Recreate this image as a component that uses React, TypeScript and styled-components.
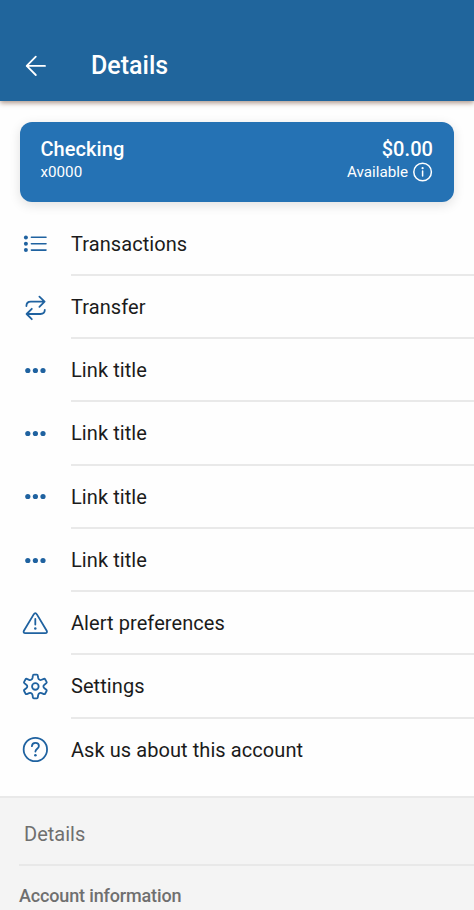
import React from "react";
import styled, { createGlobalStyle } from "styled-components";

const GlobalStyle = createGlobalStyle`
  *, *::before, *::after { box-sizing: border-box; }
  html, body { margin: 0; padding: 0; background: #fff; }
  body { font-family: Roboto, "Liberation Sans", sans-serif; color: #1b1b1b; overflow: hidden; }
`;

const Screen = styled.div`
  width: 100%;
  height: 910px;
  display: flex;
  flex-direction: column;
  overflow: hidden;
  background: #fefefe;
`;

const Header = styled.header`
  flex: none;
  height: 101px;
  padding: 30px 0 0 20px;
  display: flex;
  align-items: center;
  background: #20659c;
  color: #fff;
  box-shadow: 0 2px 5px rgba(92, 48, 24, 0.5);
`;

const BackButton = styled.button`
  width: 32px;
  height: 32px;
  padding: 0;
  border: 0;
  background: none;
  color: inherit;
  display: flex;
`;

const Title = styled.h1`
  margin: 0 0 0 39px;
  font-size: 25px;
  line-height: 30px;
  font-weight: 500;
  letter-spacing: 0;
`;

const AccountCard = styled.section`
  flex: none;
  height: 80.5px;
  margin: 20.6px 20px 0;
  padding: 14.4px 21px 0 20.5px;
  border-radius: 12px;
  background: #2572b4;
  color: #fff;
  display: flex;
  justify-content: space-between;
  box-shadow: 0 3px 12px rgba(0, 0, 0, 0.12);
`;

const CardColumn = styled.div<{ $end?: boolean }>`
  display: flex;
  flex-direction: column;
  align-items: ${(p) => (p.$end ? "flex-end" : "flex-start")};
`;

const CardHeading = styled.div`
  font-size: 20px;
  line-height: 26px;
  font-weight: 500;
  letter-spacing: 0.06px;
`;

const CardCaption = styled.div`
  height: 20px;
  display: flex;
  align-items: center;
  gap: 5px;
  font-size: 15.2px;
  line-height: 20px;
`;

const Menu = styled.nav`
  flex: none;
  margin-top: 10.5px;
  padding-bottom: 14.3px;
`;

const MenuRow = styled.a`
  height: 63.25px;
  padding-left: 20px;
  display: flex;
  align-items: stretch;
  color: #1b1b1b;

  &:last-child > span { border-bottom-color: transparent; }
`;

const RowIcon = styled.div`
  flex: none;
  width: 51px;
  padding-bottom: 1.5px;
  display: flex;
  align-items: center;
  color: #1f62a0;
`;

const RowLabel = styled.span`
  flex: 1;
  padding-top: 0.8px;
  display: flex;
  align-items: center;
  border-bottom: 2px solid #e9e9e9;
  font-size: 20px;
  letter-spacing: 0.07px;
`;

const DetailsPanel = styled.section`
  flex: 1;
  border-top: 2px solid #e9e9e9;
  background: #f4f4f4;
  color: #6f6f6f;
`;

const PanelTitle = styled.h2`
  height: 68px;
  margin: 0 0 0 19px;
  padding: 6px 0 0 5px;
  display: flex;
  align-items: center;
  border-bottom: 2px solid #e8e8e8;
  font-size: 20px;
  font-weight: 400;
`;

const PanelSubtitle = styled.h3`
  margin: 19px 0 0 19px;
  font-size: 18px;
  line-height: 22px;
  font-weight: 500;
  letter-spacing: -0.15px;
`;

const Glyph = styled.svg`
  display: block;
  width: 32px;
  height: 32px;
  fill: none;
  stroke: currentColor;
  stroke-width: 1.8;
  stroke-linecap: round;
  stroke-linejoin: round;
`;

const InfoGlyph = styled(Glyph)`
  width: 20px;
  height: 20px;
  stroke-width: 1.5;
`;

const BackIcon = () => (
  <Glyph viewBox="0 0 32 32">
    <path d="M25 15.9H6.7M15.8 6.7L6.7 15.9L15.8 25" />
  </Glyph>
);

const InfoIcon = () => (
  <InfoGlyph viewBox="0 0 20 20">
    <circle cx="9.6" cy="10" r="8.8" />
    <path d="M9.6 9V14" />
    <circle cx="9.6" cy="6.2" r="1.1" fill="currentColor" stroke="none" />
  </InfoGlyph>
);

const ListIcon = () => (
  <Glyph viewBox="0 0 32 32">
    <g fill="currentColor" stroke="none">
      <circle cx="5.9" cy="10.5" r="2" />
      <circle cx="5.9" cy="16.8" r="2" />
      <circle cx="5.9" cy="23.1" r="2" />
    </g>
    <path strokeWidth="1.6" d="M11.4 10.3H26M11.4 16.8H26M11.4 23.1H26" />
  </Glyph>
);

const TransferIcon = () => (
  <Glyph viewBox="0 0 32 32">
    <path d="M6.4 15C6.4 12 8 10.6 10.8 10.6H24.6M19.4 5.6L24.6 10.6L19.4 15.8" />
    <path d="M24.8 18.8C24.8 21.7 23.2 23 20.4 23H6.6M11.8 17.8L6.6 23L11.8 28.2" />
  </Glyph>
);

const MoreIcon = () => (
  <Glyph viewBox="0 0 32 32">
    <g fill="currentColor" stroke="none">
      <circle cx="7.8" cy="16.5" r="2.6" />
      <circle cx="15.4" cy="16.5" r="2.6" />
      <circle cx="23" cy="16.5" r="2.6" />
    </g>
  </Glyph>
);

const AlertIcon = () => (
  <Glyph viewBox="0 0 32 32">
    <path d="M13.7 7.4Q15.3 5 16.9 7.4L26.7 23.7Q27.7 26.2 25.2 26.2H5.4Q2.9 26.2 3.9 23.7Z" />
    <path d="M15.3 12V17.5" />
    <circle cx="15.3" cy="21.6" r="1.25" fill="currentColor" stroke="none" />
  </Glyph>
);

const GearIcon = () => (
  <Glyph viewBox="0 0 32 32">
    <path d="M13.8 4.6H16.9Q17.7 4.6 17.8 5.4L18.2 8Q18.5 9.3 19.6 9.8Q20.5 10.3 21.6 9.8L23.9 8.8Q24.7 8.5 25.1 9.2L26.6 11.9Q27 12.6 26.4 13.1L24.4 14.7Q23.4 15.4 23.4 16.4Q23.4 17.4 24.4 18.2L26.4 19.8Q27 20.3 26.6 21L25.1 23.7Q24.7 24.4 23.9 24.1L21.6 23.1Q20.5 22.6 19.6 23.1Q18.5 23.6 18.2 24.9L17.8 27.5Q17.7 28.3 16.9 28.3H13.8Q13 28.3 12.9 27.5L12.5 24.9Q12.2 23.6 11.1 23.1Q10.2 22.6 9.1 23.1L6.8 24.1Q6 24.4 5.6 23.7L4.1 21Q3.7 20.3 4.3 19.8L6.3 18.2Q7.3 17.4 7.3 16.4Q7.3 15.4 6.3 14.7L4.3 13.1Q3.7 12.6 4.1 11.9L5.6 9.2Q6 8.5 6.8 8.8L9.1 9.8Q10.2 10.3 11.1 9.8Q12.2 9.3 12.5 8L12.9 5.4Q13 4.6 13.8 4.6Z" />
    <circle cx="15.35" cy="16.45" r="3.3" />
  </Glyph>
);

const HelpIcon = () => (
  <Glyph viewBox="0 0 32 32">
    <circle cx="15.35" cy="16.5" r="11.7" />
    <path d="M11.9 13.2C12 10.8 13.5 9.8 15.4 9.8C17.4 9.8 18.9 11 18.9 12.9C18.9 15.7 15.4 15.7 15.4 18.6" />
    <circle cx="15.4" cy="22.3" r="1.3" fill="currentColor" stroke="none" />
  </Glyph>
);

const menuItems = [
  { label: "Transactions", Icon: ListIcon },
  { label: "Transfer", Icon: TransferIcon },
  { label: "Link title", Icon: MoreIcon },
  { label: "Link title", Icon: MoreIcon },
  { label: "Link title", Icon: MoreIcon },
  { label: "Link title", Icon: MoreIcon },
  { label: "Alert preferences", Icon: AlertIcon },
  { label: "Settings", Icon: GearIcon },
  { label: "Ask us about this account", Icon: HelpIcon },
];

export default function App() {
  return (
    <>
      <GlobalStyle />
      <Screen>
        <Header>
          <BackButton aria-label="Back">
            <BackIcon />
          </BackButton>
          <Title>Details</Title>
        </Header>
        <AccountCard>
          <CardColumn>
            <CardHeading>Checking</CardHeading>
            <CardCaption>x0000</CardCaption>
          </CardColumn>
          <CardColumn $end>
            <CardHeading>$0.00</CardHeading>
            <CardCaption>
              Available
              <InfoIcon />
            </CardCaption>
          </CardColumn>
        </AccountCard>
        <Menu>
          {menuItems.map(({ label, Icon }, i) => (
            <MenuRow key={i}>
              <RowIcon>
                <Icon />
              </RowIcon>
              <RowLabel>{label}</RowLabel>
            </MenuRow>
          ))}
        </Menu>
        <DetailsPanel>
          <PanelTitle>Details</PanelTitle>
          <PanelSubtitle>Account information</PanelSubtitle>
        </DetailsPanel>
      </Screen>
    </>
  );
}
